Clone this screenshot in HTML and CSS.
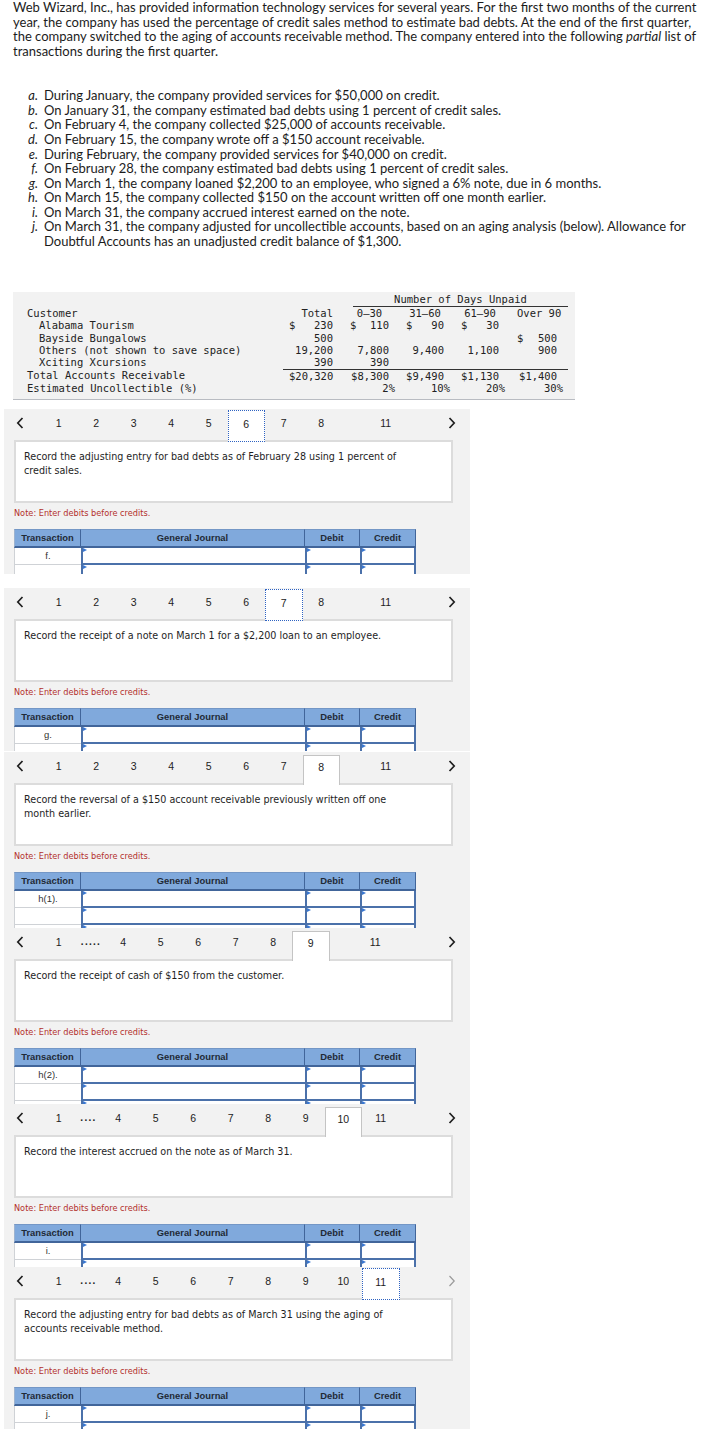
FILE: index.html
```html
<!DOCTYPE html>
<html lang="en">
<head>
<meta charset="utf-8">
<title>Web Wizard, Inc. – Allowance for Doubtful Accounts</title>
<link rel="stylesheet" href="styles.css">
</head>
<body>
<main class="page">
  <p class="intro">Web Wizard, Inc., has provided information technology services for several years. For the first two months of the current<br>year, the company has used the percentage of credit sales method to estimate bad debts. At the end of the first quarter,<br>the company switched to the aging of accounts receivable method. The company entered into the following <em>partial</em> list of<br>transactions during the first quarter.</p>

  <ol class="tx">
    <li><i class="mk">a.</i><span>During January, the company provided services for $50,000 on credit.</span></li>
    <li><i class="mk">b.</i><span>On January 31, the company estimated bad debts using 1 percent of credit sales.</span></li>
    <li><i class="mk">c.</i><span>On February 4, the company collected $25,000 of accounts receivable.</span></li>
    <li><i class="mk">d.</i><span>On February 15, the company wrote off a $150 account receivable.</span></li>
    <li><i class="mk">e.</i><span>During February, the company provided services for $40,000 on credit.</span></li>
    <li><i class="mk">f.</i><span>On February 28, the company estimated bad debts using 1 percent of credit sales.</span></li>
    <li><i class="mk">g.</i><span>On March 1, the company loaned $2,200 to an employee, who signed a 6% note, due in 6 months.</span></li>
    <li><i class="mk">h.</i><span>On March 15, the company collected $150 on the account written off one month earlier.</span></li>
    <li><i class="mk">i.</i><span>On March 31, the company accrued interest earned on the note.</span></li>
    <li><i class="mk">j.</i><span>On March 31, the company adjusted for uncollectible accounts, based on an aging analysis (below). Allowance for Doubtful Accounts has an unadjusted credit balance of $1,300.</span></li>
  </ol>

  <section class="aging">
    <div class="aging-head">Number of Days Unpaid</div>
    <div class="aging-grid">
      <div>Customer</div><div class="r">Total</div><div class="c">0–30</div><div class="c">31–60</div><div class="c">61–90</div><div class="c">Over 90</div><div></div>

      <div class="ind">Alabama Tourism</div><div class="m"><span>$</span><span>230</span></div><div class="m"><span>$</span><span>110</span></div><div class="m"><span>$</span><span>90</span></div><div class="m"><span>$</span><span>30</span></div><div></div><div></div>

      <div class="ind">Bayside Bungalows</div><div class="r">500</div><div></div><div></div><div></div><div class="m"><span>$</span><span>500</span></div><div></div>

      <div class="ind">Others (not shown to save space)</div><div class="r">19,200</div><div class="r">7,800</div><div class="r">9,400</div><div class="r">1,100</div><div class="r">900</div><div></div>

      <div class="ind">Xciting Xcursions</div><div class="r">390</div><div class="r">390</div><div></div><div></div><div></div><div></div>

      <div>Total Accounts Receivable</div><div class="r rule">$20,320</div><div class="r rule">$8,300</div><div class="r rule">$9,490</div><div class="r rule">$1,130</div><div class="r rule">$1,400</div><div class="rule"></div>

      <div>Estimated Uncollectible (%)</div><div></div><div class="r pct"><span>2%</span></div><div class="r pct"><span>10%</span></div><div class="r pct"><span>20%</span></div><div class="r pct"><span>30%</span></div><div></div>
    </div>
  </section>

  <!-- Step 6 -->
  <section class="step clip-165 first">
    <nav class="steps">
      <span class="arrow"><svg width="8" height="12" viewBox="0 0 8 12"><path d="M6.5 1 L1.8 6 L6.5 11" fill="none" stroke="#1f1f1f" stroke-width="1.7"/></svg></span>
      <span class="num">1</span><span class="num">2</span><span class="num">3</span><span class="num">4</span><span class="num">5</span>
      <span class="num focus">6</span><span class="num">7</span><span class="num">8</span>
      <span class="gap"></span>
      <span class="num">11</span>
      <span class="arrow next"><svg width="8" height="12" viewBox="0 0 8 12"><path d="M1.5 1 L6.2 6 L1.5 11" fill="none" stroke="#1f1f1f" stroke-width="1.7"/></svg></span>
    </nav>
    <div class="prompt">Record the adjusting entry for bad debts as of February 28 using 1 percent of credit sales.</div>
    <p class="note">Note: Enter debits before credits.</p>
    <div class="journal">
      <div class="th first">Transaction</div><div class="th">General Journal</div><div class="th">Debit</div><div class="th">Credit</div>
      <div class="tc">f.</div><div class="in"></div><div class="in"></div><div class="in last"></div>
      <div class="tc"></div><div class="in"></div><div class="in"></div><div class="in last"></div>
    </div>
  </section>

  <!-- Step 7 -->
  <section class="step clip-163 second">
    <nav class="steps">
      <span class="arrow"><svg width="8" height="12" viewBox="0 0 8 12"><path d="M6.5 1 L1.8 6 L6.5 11" fill="none" stroke="#1f1f1f" stroke-width="1.7"/></svg></span>
      <span class="num">1</span><span class="num">2</span><span class="num">3</span><span class="num">4</span><span class="num">5</span>
      <span class="num">6</span><span class="num focus">7</span><span class="num">8</span>
      <span class="gap"></span>
      <span class="num">11</span>
      <span class="arrow next"><svg width="8" height="12" viewBox="0 0 8 12"><path d="M1.5 1 L6.2 6 L1.5 11" fill="none" stroke="#1f1f1f" stroke-width="1.7"/></svg></span>
    </nav>
    <div class="prompt">Record the receipt of a note on March 1 for a $2,200 loan to an employee.</div>
    <p class="note">Note: Enter debits before credits.</p>
    <div class="journal">
      <div class="th first">Transaction</div><div class="th">General Journal</div><div class="th">Debit</div><div class="th">Credit</div>
      <div class="tc">g.</div><div class="in"></div><div class="in"></div><div class="in last"></div>
      <div class="tc"></div><div class="in"></div><div class="in"></div><div class="in last"></div>
    </div>
  </section>

  <!-- Step 8 -->
  <section class="step clip-176 joined">
    <nav class="steps">
      <span class="arrow"><svg width="8" height="12" viewBox="0 0 8 12"><path d="M6.5 1 L1.8 6 L6.5 11" fill="none" stroke="#1f1f1f" stroke-width="1.7"/></svg></span>
      <span class="num">1</span><span class="num">2</span><span class="num">3</span><span class="num">4</span><span class="num">5</span>
      <span class="num">6</span><span class="num">7</span><span class="num tab">8</span>
      <span class="gap"></span>
      <span class="num">11</span>
      <span class="arrow next"><svg width="8" height="12" viewBox="0 0 8 12"><path d="M1.5 1 L6.2 6 L1.5 11" fill="none" stroke="#1f1f1f" stroke-width="1.7"/></svg></span>
    </nav>
    <div class="prompt">Record the reversal of a $150 account receivable previously written off one month earlier.</div>
    <p class="note">Note: Enter debits before credits.</p>
    <div class="journal">
      <div class="th first">Transaction</div><div class="th">General Journal</div><div class="th">Debit</div><div class="th">Credit</div>
      <div class="tc">h(1).</div><div class="in"></div><div class="in"></div><div class="in last"></div>
      <div class="tc"></div><div class="in"></div><div class="in"></div><div class="in last"></div>
      <div class="tc"></div><div class="in"></div><div class="in"></div><div class="in last"></div>
    </div>
  </section>

  <!-- Step 9 -->
  <section class="step clip-176">
    <nav class="steps">
      <span class="arrow"><svg width="8" height="12" viewBox="0 0 8 12"><path d="M6.5 1 L1.8 6 L6.5 11" fill="none" stroke="#1f1f1f" stroke-width="1.7"/></svg></span>
      <span class="num">1</span>
      <span class="gap dots">.....</span>
      <span class="num">4</span><span class="num">5</span><span class="num">6</span><span class="num">7</span><span class="num">8</span>
      <span class="num tab">9</span>
      <span class="gap"></span>
      <span class="num">11</span>
      <span class="arrow next"><svg width="8" height="12" viewBox="0 0 8 12"><path d="M1.5 1 L6.2 6 L1.5 11" fill="none" stroke="#1f1f1f" stroke-width="1.7"/></svg></span>
    </nav>
    <div class="prompt">Record the receipt of cash of $150 from the customer.</div>
    <p class="note">Note: Enter debits before credits.</p>
    <div class="journal">
      <div class="th first">Transaction</div><div class="th">General Journal</div><div class="th">Debit</div><div class="th">Credit</div>
      <div class="tc">h(2).</div><div class="in"></div><div class="in"></div><div class="in last"></div>
      <div class="tc"></div><div class="in"></div><div class="in"></div><div class="in last"></div>
      <div class="tc"></div><div class="in"></div><div class="in"></div><div class="in last"></div>
    </div>
  </section>

  <!-- Step 10 -->
  <section class="step clip-163">
    <nav class="steps">
      <span class="arrow"><svg width="8" height="12" viewBox="0 0 8 12"><path d="M6.5 1 L1.8 6 L6.5 11" fill="none" stroke="#1f1f1f" stroke-width="1.7"/></svg></span>
      <span class="num">1</span>
      <span class="gap dots narrow">....</span>
      <span class="num">4</span><span class="num">5</span><span class="num">6</span><span class="num">7</span><span class="num">8</span><span class="num">9</span>
      <span class="num tab">10</span>
      <span class="num">11</span>
      <span class="arrow next"><svg width="8" height="12" viewBox="0 0 8 12"><path d="M1.5 1 L6.2 6 L1.5 11" fill="none" stroke="#1f1f1f" stroke-width="1.7"/></svg></span>
    </nav>
    <div class="prompt">Record the interest accrued on the note as of March 31.</div>
    <p class="note">Note: Enter debits before credits.</p>
    <div class="journal">
      <div class="th first">Transaction</div><div class="th">General Journal</div><div class="th">Debit</div><div class="th">Credit</div>
      <div class="tc">i.</div><div class="in"></div><div class="in"></div><div class="in last"></div>
      <div class="tc"></div><div class="in"></div><div class="in"></div><div class="in last"></div>
    </div>
  </section>

  <!-- Step 11 -->
  <section class="step clip-162 last-step">
    <nav class="steps">
      <span class="arrow"><svg width="8" height="12" viewBox="0 0 8 12"><path d="M6.5 1 L1.8 6 L6.5 11" fill="none" stroke="#1f1f1f" stroke-width="1.7"/></svg></span>
      <span class="num">1</span>
      <span class="gap dots narrow">....</span>
      <span class="num">4</span><span class="num">5</span><span class="num">6</span><span class="num">7</span><span class="num">8</span><span class="num">9</span><span class="num">10</span>
      <span class="num focus">11</span>
      <span class="arrow next disabled"><svg width="8" height="12" viewBox="0 0 8 12"><path d="M1.5 1 L6.2 6 L1.5 11" fill="none" stroke="#9a9a9a" stroke-width="1.2"/></svg></span>
    </nav>
    <div class="prompt">Record the adjusting entry for bad debts as of March 31 using the aging of accounts receivable method.</div>
    <p class="note">Note: Enter debits before credits.</p>
    <div class="journal">
      <div class="th first">Transaction</div><div class="th">General Journal</div><div class="th">Debit</div><div class="th">Credit</div>
      <div class="tc">j.</div><div class="in"></div><div class="in"></div><div class="in last"></div>
      <div class="tc"></div><div class="in"></div><div class="in"></div><div class="in last"></div>
    </div>
  </section>
</main>
</body>
</html>
```

FILE: styles.css
```css
* { box-sizing: border-box; }

html, body {
  margin: 0;
  padding: 0;
  background: #ffffff;
}

.page {
  width: 728px;
  padding-bottom: 18px;
  color: #1c1c1c;
}

/* ---------- intro ---------- */
.intro {
  margin: 0;
  padding: 0 0 0 13px;
  font-family: "Lato", "Liberation Sans", sans-serif;
  font-size: 13px;
  line-height: 14.6px;
  white-space: nowrap;
}
.intro em { font-style: italic; }

.tx {
  list-style: none;
  margin: 30px 0 0 13px;
  padding: 0;
  width: 700px;
  font-family: "Lato", "Liberation Sans", sans-serif;
  font-size: 13px;
  line-height: 14.55px;
}
.tx li {
  display: grid;
  grid-template-columns: 31px 1fr;
}
.tx .mk {
  font-style: italic;
  text-align: right;
  padding-right: 6px;
}

/* ---------- aging table ---------- */
.aging {
  margin: 44px 0 0 13px;
  width: 562px;
  background: #f2f2f2;
  border-bottom: 1px solid #b9bcc2;
  padding: 1px 7px 4px 0;
  font-family: "DejaVu Sans Mono", "Liberation Mono", monospace;
  font-size: 10.5px;
  line-height: 12.4px;
  color: #222;
}
.aging-head {
  margin-left: 340px;
  width: 215px;
  text-align: center;
  border-bottom: 1px solid #333;
}
.aging-grid {
  display: grid;
  grid-template-columns: 270px 50px 56px 55px 55px 58px 11px;
}
.aging-grid > div { white-space: nowrap; }
.aging-grid > div:nth-child(7n+1) { padding-left: 14px; }
.aging-grid > div:nth-child(7n+1).ind { padding-left: 26px; }
.aging-grid > div:nth-child(7n+2) { padding-left: 6px; }
.aging-grid > div:nth-child(7n+3),
.aging-grid > div:nth-child(7n+4),
.aging-grid > div:nth-child(7n+5) { padding-left: 17px; }
.aging-grid > div:nth-child(7n+6) { padding-left: 18px; }
.aging-grid .r { text-align: right; }
.aging-grid .c { text-align: center; }
.aging-grid .m { display: flex; justify-content: space-between; }
.aging-grid .rule { border-top: 1px solid #333; }
.aging-grid .pct span { display: inline-block; margin-right: -6px; }

/* ---------- step panels ---------- */
.step {
  width: 466px;
  margin-left: 4px;
  background: #f2f2f2;
  overflow: hidden;
  font-family: "DejaVu Sans", Verdana, sans-serif;
}
.step.first { margin-top: 9px; }
.step.second { margin-top: 14px; }
.step.joined { margin-top: 1px; }
.clip-165 { height: 165px; }
.clip-163 { height: 163px; }
.clip-176 { height: 176px; }
.clip-162 { height: 162px; }

.steps {
  display: flex;
  align-items: flex-start;
  height: 31px;
  padding: 0 14px 0 12px;
  font-family: "Liberation Sans", Arial, sans-serif;
  font-size: 10.5px;
  color: #222;
}
.steps .arrow {
  width: 24px;
  height: 29px;
  display: flex;
  align-items: center;
}
.steps .arrow.next {
  width: 8px;
  margin-left: auto;
}
.steps .num {
  flex: 0 0 37.5px;
  height: 31px;
  line-height: 29px;
  text-align: center;
}
.steps .gap {
  flex: 0 0 27px;
  height: 31px;
  line-height: 27px;
  text-align: center;
}
.steps .gap.narrow { flex-basis: 22px; }
.steps .dots {
  font-weight: bold;
  letter-spacing: 1.3px;
  font-size: 10px;
}
.steps .num.focus {
  height: 32px;
  margin-top: 1px;
  margin-bottom: -2px;
  line-height: 26px;
  background: #fff;
  border: 1px dotted #2f63c2;
  position: relative;
  z-index: 1;
}
.steps .num.tab {
  height: 30px;
  margin-top: 3px;
  margin-bottom: -2px;
  line-height: 22px;
  background: #fff;
  border: 1px solid #c4c4c4;
  border-bottom: none;
  position: relative;
  z-index: 1;
}

.prompt {
  height: 63px;
  margin: 0 17px 0 10px;
  padding: 8px 40px 0 8px;
  background: #fff;
  border: 2px solid #dcdcdc;
  font-size: 9.6px;
  line-height: 14px;
  color: #1e1e1e;
}

.note {
  margin: 4px 0 0 10px;
  font-size: 8.2px;
  line-height: 12px;
  color: #b3302c;
}

.journal {
  display: grid;
  grid-template-columns: 67px 224px 55px 56px;
  width: 402px;
  margin: 10px 0 0 10px;
}
.journal .th {
  height: 19px;
  background: #80a9dc;
  border-top: 1px solid #7497c6;
  border-right: 1px solid #41659a;
  border-bottom: 2px solid #41659a;
  font-family: "Liberation Sans", Arial, sans-serif;
  font-weight: bold;
  font-size: 9.4px;
  line-height: 16px;
  text-align: center;
  color: #1f2a36;
}
.journal .th.first { border-left: 1px solid #9db3d0; }
.journal .tc {
  height: 17px;
  background: #fff;
  border-left: 1px solid #cfd2d6;
  border-bottom: 1px solid #cfd2d6;
  font-family: "Liberation Sans", Arial, sans-serif;
  font-size: 9.5px;
  line-height: 16px;
  text-align: center;
  color: #333;
}
.journal .in {
  height: 17px;
  background: #fff;
  border-left: 2px solid #4b71aa;
  border-bottom: 2px solid #4b71aa;
  position: relative;
}
.journal .in.last { border-right: 2px solid #4b71aa; }
.journal .in::before {
  content: "";
  position: absolute;
  left: 0;
  top: 0;
  border-left: 4px solid #3a77d0;
  border-top: 2.5px solid transparent;
  border-bottom: 2.5px solid transparent;
}
```
